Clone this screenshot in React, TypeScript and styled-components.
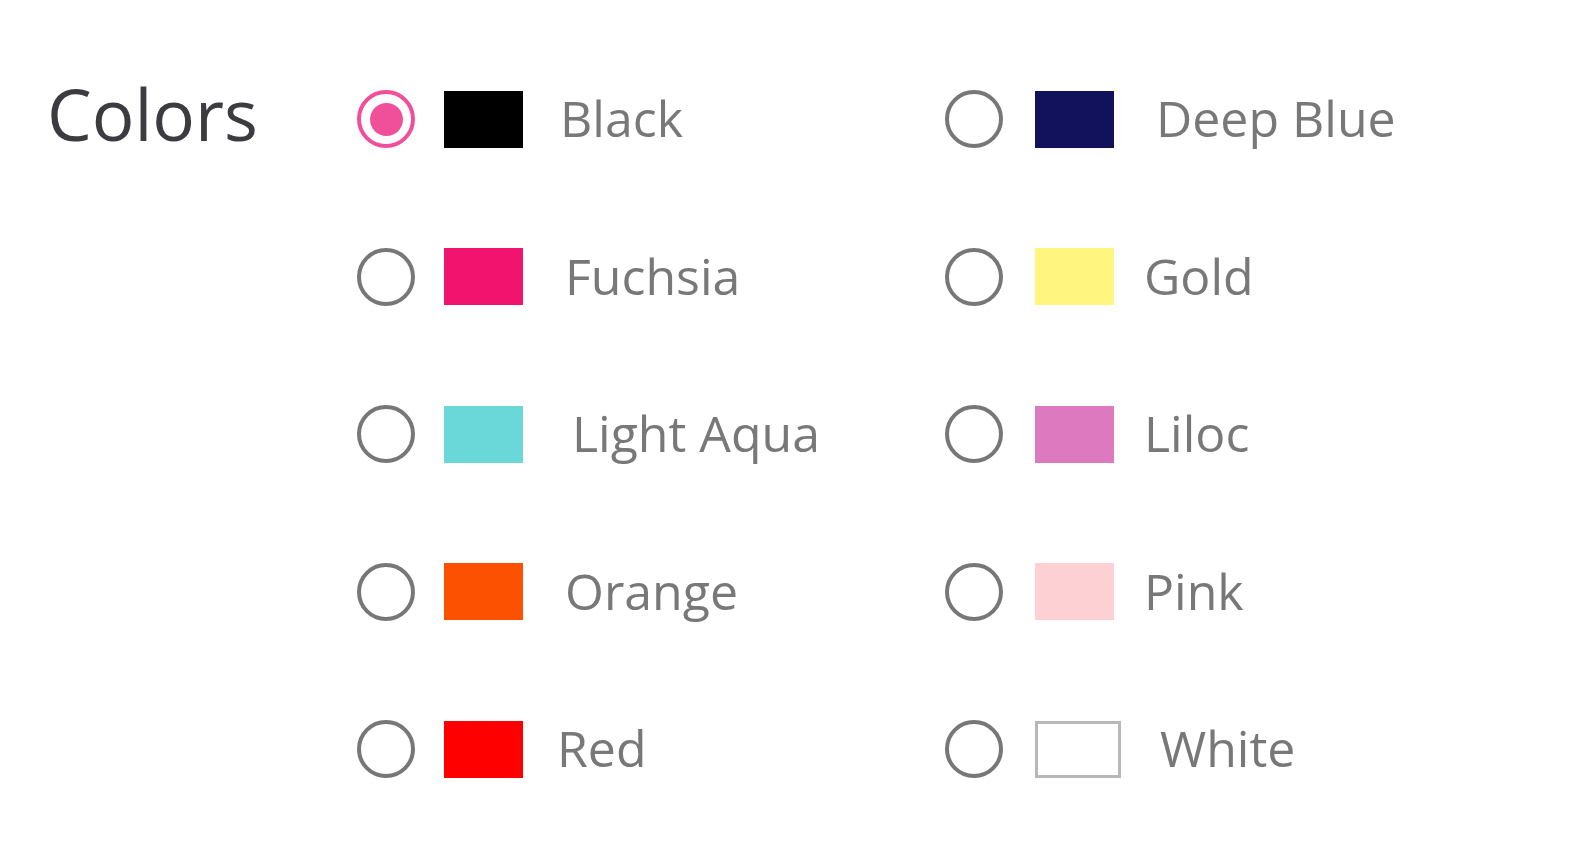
import React, { useState } from 'react';
import styled, { createGlobalStyle } from 'styled-components';

const GlobalStyle = createGlobalStyle`
    html, body {
        margin: 0;
        padding: 0;
        background: #ffffff;
    }
    body {
        font-family: "Open Sans", "Liberation Sans", sans-serif;
    }
`

type ColorOption = {
    readonly name: string
    readonly swatch: string
    readonly labelShift: number
    readonly outlined?: boolean
}

const OPTIONS: ReadonlyArray<ColorOption> = [
    {name: 'Black', swatch: '#000000', labelShift: 37},
    {name: 'Deep Blue', swatch: '#12125c', labelShift: 42},
    {name: 'Fuchsia', swatch: '#f2136f', labelShift: 42},
    {name: 'Gold', swatch: '#fff57f', labelShift: 30},
    {name: 'Light Aqua', swatch: '#6ad8d9', labelShift: 49},
    {name: 'Liloc', swatch: '#dd79bf', labelShift: 30},
    {name: 'Orange', swatch: '#fc5200', labelShift: 42},
    {name: 'Pink', swatch: '#fdd0d4', labelShift: 30},
    {name: 'Red', swatch: '#ff0000', labelShift: 34},
    {name: 'White', swatch: '#ffffff', labelShift: 39, outlined: true},
]

export default function App() {
    const [selected, setSelected] = useState('Black')

    return <>
        <GlobalStyle />
        <Page>
            <Heading>Colors</Heading>
            <OptionGrid>
                {OPTIONS.map((option, i) =>
                    <Option key={option.name} onClick={() => setSelected(option.name)}>
                        <Radio $checked={selected === option.name} />
                        <Swatch $color={option.swatch} $outlined={!!option.outlined} $secondColumn={i % 2 === 1} />
                        <Label $shift={option.labelShift}>{option.name}</Label>
                    </Option>
                )}
            </OptionGrid>
        </Page>
    </>
}

const Page = styled.div`
    display: flex;
    flex-direction: row;
    align-items: flex-start;
    padding: 90px 0 0 47px;
    width: 1588px;
    height: 846px;
    box-sizing: border-box;
`

const Heading = styled.h2`
    margin: 0;
    width: 310px;
    height: 58px;
    display: flex;
    align-items: center;
    font-size: 71px;
    font-weight: 500;
    color: #3b3b40;
    letter-spacing: 0;
    line-height: 1;
    margin-top: -6px;
`

const OptionGrid = styled.div`
    display: grid;
    grid-template-columns: 588px 588px;
    grid-auto-rows: 58px;
    row-gap: 99.5px;
`

const Option = styled.label`
    display: flex;
    flex-direction: row;
    align-items: center;
    cursor: pointer;
`

const Radio = styled.span<{$checked: boolean}>`
    width: 58px;
    height: 58px;
    box-sizing: border-box;
    border-radius: 50%;
    border: 4px solid ${p => p.$checked ? '#f0509a' : '#777777'};
    flex-shrink: 0;
    display: flex;
    align-items: center;
    justify-content: center;
    &::after {
        content: '';
        display: ${p => p.$checked ? 'block' : 'none'};
        width: 33px;
        height: 33px;
        border-radius: 50%;
        background: #f0509a;
    }
`

const Swatch = styled.span<{$color: string, $outlined: boolean, $secondColumn: boolean}>`
    margin-left: ${p => p.$secondColumn ? '32px' : '29px'};
    width: ${p => p.$outlined ? '86px' : '79px'};
    height: 57px;
    box-sizing: border-box;
    background: ${p => p.$color};
    border: ${p => p.$outlined ? '3px solid #b8b8b8' : 'none'};
    flex-shrink: 0;
`

const Label = styled.span<{$shift: number}>`
    margin-left: ${p => p.$shift}px;
    font-size: 50px;
    font-weight: 500;
    color: #787878;
    line-height: 1;
    white-space: nowrap;
    margin-top: -2px;
`
